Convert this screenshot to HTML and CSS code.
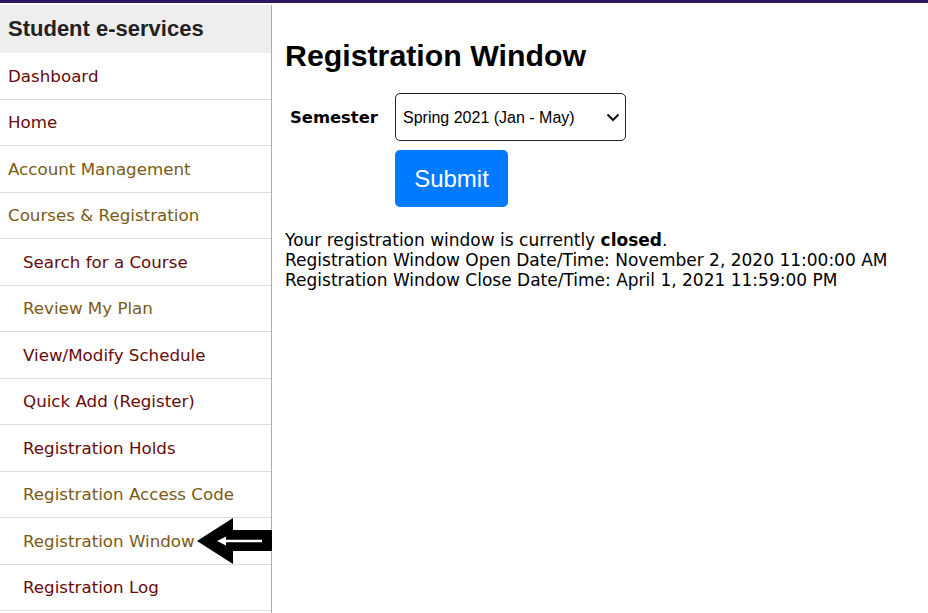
FILE: index.html
```html
<!DOCTYPE html>
<html lang="en">
<head>
<meta charset="utf-8">
<title>Registration Window</title>
<link rel="stylesheet" href="styles.css">
</head>
<body>
<div class="topbar"></div>
<div class="layout">
  <nav class="sidebar">
    <div class="side-title">Student e-services</div>
    <ul class="menu">
      <li><a class="link maroon" href="#">Dashboard</a></li>
      <li><a class="link maroon" href="#">Home</a></li>
      <li><a class="link gold" href="#">Account Management</a></li>
      <li><a class="link gold" href="#">Courses &amp; Registration</a></li>
      <li class="sub"><a class="link maroon" href="#">Search for a Course</a></li>
      <li class="sub"><a class="link gold" href="#">Review My Plan</a></li>
      <li class="sub"><a class="link maroon" href="#">View/Modify Schedule</a></li>
      <li class="sub"><a class="link maroon" href="#">Quick Add (Register)</a></li>
      <li class="sub"><a class="link maroon" href="#">Registration Holds</a></li>
      <li class="sub"><a class="link gold" href="#">Registration Access Code</a></li>
      <li class="sub current"><a class="link gold" href="#">Registration Window</a>
        <svg class="pointer" width="75" height="47" viewBox="0 0 75 47" aria-hidden="true">
          <polygon points="0,23 36,0 36,12 75,12 75,33 36,33 36,46" fill="#000"/>
          <line x1="27" y1="23" x2="65" y2="23" stroke="#fff" stroke-width="2.5"/>
          <polygon points="20,23 29,18.5 29,27.5" fill="#fff"/>
        </svg>
      </li>
      <li class="sub"><a class="link maroon" href="#">Registration Log</a></li>
    </ul>
  </nav>
  <main class="main">
    <h1 class="title">Registration Window</h1>
    <form class="form">
      <label class="label" for="sem">Semester</label>
      <div class="select-wrap">
        <select id="sem" class="select">
          <option>Spring 2021 (Jan - May)</option>
        </select>
        <svg class="chev" width="14" height="9" viewBox="0 0 14 9" aria-hidden="true">
          <polyline points="1.5,1.5 7,7 12.5,1.5" fill="none" stroke="#111" stroke-width="2"/>
        </svg>
      </div>
      <div></div>
      <button type="button" class="submit">Submit</button>
    </form>
    <div class="info">
      <div>Your registration window is currently <b>closed</b>.</div>
      <div>Registration Window Open Date/Time: November 2, 2020 11:00:00 AM</div>
      <div>Registration Window Close Date/Time: April 1, 2021 11:59:00 PM</div>
    </div>
  </main>
</div>
</body>
</html>
```

FILE: styles.css
```css
html, body {
  margin: 0;
  padding: 0;
  background: #fff;
}
body {
  font-family: "DejaVu Sans", Verdana, sans-serif;
  color: #000;
}
.topbar {
  height: 3px;
  background: #2e1760;
}
.layout {
  display: flex;
  align-items: stretch;
  min-height: 610px;
}
.sidebar {
  width: 271px;
  flex: 0 0 271px;
  border-right: 1px solid #aaa;
  margin-top: 2px;
}
.side-title {
  background: #eee;
  height: 48px;
  line-height: 48px;
  padding-left: 8px;
  font-family: "Liberation Sans", Arial, sans-serif;
  font-weight: bold;
  font-size: 22px;
  color: #222;
}
.menu {
  list-style: none;
  margin: 0;
  padding: 0;
}
.menu li {
  position: relative;
  height: 45.5px;
  border-bottom: 1px solid #ddd;
  display: flex;
  align-items: center;
  padding-left: 8px;
}
.menu li.sub {
  padding-left: 23px;
}
.link {
  text-decoration: none;
  font-size: 16.7px;
}
.maroon { color: #660a0a; }
.gold { color: #7a5a14; }
.pointer {
  position: absolute;
  left: 197px;
  top: 0;
}
.main {
  flex: 1;
  padding-left: 13px;
}
.title {
  font-family: "Liberation Sans", Arial, sans-serif;
  font-size: 30.3px;
  font-weight: bold;
  margin: 35px 0 19px 0;
  line-height: 36px;
}
.form {
  display: grid;
  grid-template-columns: 110px auto;
  row-gap: 9px;
  justify-content: start;
  align-items: center;
}
.label {
  padding-left: 5px;
  font-weight: bold;
  font-size: 16.4px;
  font-family: "DejaVu Sans", Verdana, sans-serif;
}
.select-wrap {
  position: relative;
  width: 231px;
  height: 48px;
}
.select {
  appearance: none;
  -webkit-appearance: none;
  width: 231px;
  height: 48px;
  box-sizing: border-box;
  border: 1px solid #222;
  border-radius: 5px;
  background: #fff;
  padding: 0 0 0 7px;
  font-family: "Liberation Sans", Arial, sans-serif;
  font-size: 16px;
  color: #000;
}
.chev {
  position: absolute;
  right: 6px;
  top: 20px;
  pointer-events: none;
}
.submit {
  width: 113px;
  height: 57px;
  background: #007bff;
  color: #fff;
  border: none;
  border-radius: 5px;
  font-family: "Liberation Sans", Arial, sans-serif;
  font-size: 24px;
  padding: 0;
}
.info {
  margin-top: 23px;
  font-family: "DejaVu Sans", sans-serif;
  font-size: 17px;
  line-height: 20px;
}
```
